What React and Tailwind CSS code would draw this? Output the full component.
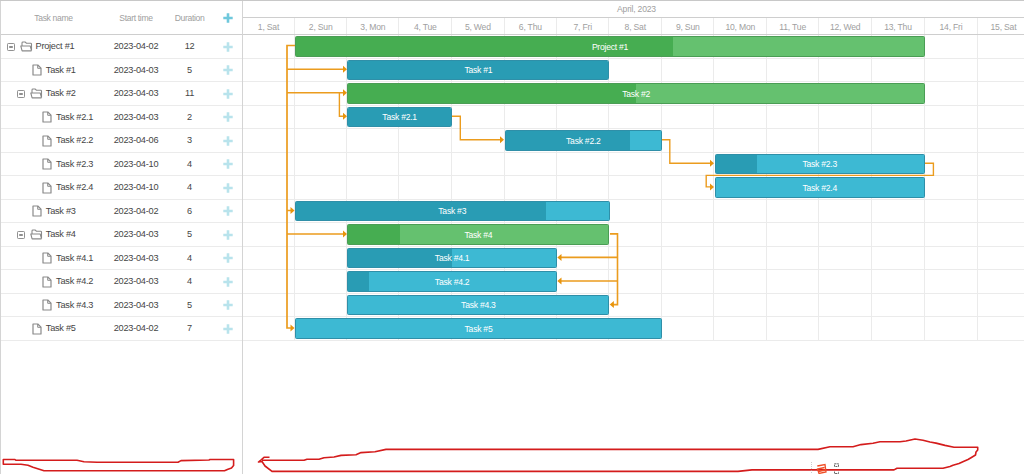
import React from 'react';

const ROW_HEIGHT = 23.5;

const TASKS = [
    { id: 1, name: 'Project #1', start: '2023-04-02', duration: 12, level: 0, group: true, day: 1, span: 12, progress: 60 },
    { id: 2, name: 'Task #1', start: '2023-04-03', duration: 5, level: 1, day: 2, span: 5, progress: 100 },
    { id: 3, name: 'Task #2', start: '2023-04-03', duration: 11, level: 1, group: true, day: 2, span: 11, progress: 50 },
    { id: 4, name: 'Task #2.1', start: '2023-04-03', duration: 2, level: 2, day: 2, span: 2, progress: 100 },
    { id: 5, name: 'Task #2.2', start: '2023-04-06', duration: 3, level: 2, day: 5, span: 3, progress: 80 },
    { id: 6, name: 'Task #2.3', start: '2023-04-10', duration: 4, level: 2, day: 9, span: 4, progress: 20 },
    { id: 7, name: 'Task #2.4', start: '2023-04-10', duration: 4, level: 2, day: 9, span: 4, progress: 0 },
    { id: 8, name: 'Task #3', start: '2023-04-02', duration: 6, level: 1, day: 1, span: 6, progress: 80 },
    { id: 9, name: 'Task #4', start: '2023-04-03', duration: 5, level: 1, group: true, day: 2, span: 5, progress: 20 },
    { id: 10, name: 'Task #4.1', start: '2023-04-03', duration: 4, level: 2, day: 2, span: 4, progress: 50 },
    { id: 11, name: 'Task #4.2', start: '2023-04-03', duration: 4, level: 2, day: 2, span: 4, progress: 10 },
    { id: 12, name: 'Task #4.3', start: '2023-04-03', duration: 5, level: 2, day: 2, span: 5, progress: 0 },
    { id: 13, name: 'Task #5', start: '2023-04-02', duration: 7, level: 1, day: 1, span: 7, progress: 0 },
];

const DAYS = ['1, Sat', '2, Sun', '3, Mon', '4, Tue', '5, Wed', '6, Thu', '7, Fri', '8, Sat', '9, Sun', '10, Mon', '11, Tue', '12, Wed', '13, Thu', '14, Fri', '15, Sat'];

// Left edge of every day column, relative to the timeline
const EDGES = [0, 52, 104.3, 156.5, 209, 261.7, 314, 366.5, 419, 471.5, 524, 576.4, 629, 682, 735, 787];

const dayWidth = (i) => EDGES[i + 1] - EDGES[i];

const PlusIcon = ({ className }) => (
    <svg width="10" height="10" viewBox="0 0 10 10" className={className}>
        <path d="M5 0.3V9.7M0.3 5H9.7" stroke="currentColor" strokeWidth="2.6" />
    </svg>
);

const ToggleIcon = () => (
    <svg width="8" height="8" viewBox="0 0 8 8" className="shrink-0">
        <rect x="0.5" y="0.5" width="7" height="7" rx="0.8" fill="#fff" stroke="#858585" strokeWidth="0.9" />
        <path d="M2.2 4H5.8" stroke="#333" strokeWidth="1.1" />
    </svg>
);

const FolderIcon = () => (
    <svg width="13" height="11" viewBox="0 0 13 11" className="shrink-0" fill="none" stroke="#8a8a8a" strokeWidth="1.1">
        <path d="M2 4.9V1.9Q2 1 2.9 1H5.2L6.4 2.2H10.6Q11.5 2.2 11.5 3.1V9.6" />
        <path d="M11.5 9.9H2.1L0.8 5H10.2L11.5 9.4" strokeLinejoin="round" />
    </svg>
);

const FileIcon = () => (
    <svg width="10" height="12" viewBox="0 0 10 12" className="shrink-0" fill="none" stroke="#8a8a8a" strokeWidth="1.2">
        <path d="M1 1H5.8L9 4.2V11H1Z" strokeLinejoin="round" />
        <path d="M5.7 1V4.3H9" strokeWidth="1" />
    </svg>
);

const GridRow = ({ task }) => (
    <div className="flex h-[23.5px] items-center border-b border-[#ebebeb] pt-px text-[9.2px] tracking-[-0.25px] text-[#454545]">
        <div className="flex w-[105px] items-center pl-[6px]">
            <div className="shrink-0" style={{ width: task.level * 10.3 }} />
            {task.group ? (
                <>
                    <ToggleIcon />
                    <div className="ml-[5px] mr-[2.5px]"><FolderIcon /></div>
                </>
            ) : (
                <div className="ml-[14.5px] mr-[4px]"><FileIcon /></div>
            )}
            <span className="whitespace-nowrap">{task.name}</span>
        </div>
        <div className="w-[60px] text-center">{task.start}</div>
        <div className="w-[47px] text-center">{task.duration}</div>
        <div className="flex w-[29px] justify-center"><PlusIcon className="text-[#b8e3ec]" /></div>
    </div>
);

const TaskBar = ({ task }) => {
    const left = EDGES[task.day];
    const width = EDGES[task.day + task.span] - left;
    const colors = task.group ? 'bg-[#65c16f] border-[#4b9d55]' : 'bg-[#3db9d3] border-[#2f8fa8]';

    return (
        <div className={`relative h-[20.5px] overflow-hidden rounded-[1.5px] border ${colors}`} style={{ marginLeft: left, width }}>
            <div className={`h-full ${task.group ? 'bg-[#46ad51]' : 'bg-[#299cb4]'}`} style={{ width: `${task.progress}%` }} />
            <div className="absolute inset-0 flex items-center justify-center pt-[2px] text-[8.6px] tracking-[-0.25px] text-white">{task.name}</div>
        </div>
    );
};

const Links = () => (
    <svg width="1024" height="474" viewBox="0 0 1024 474" className="pointer-events-none absolute left-0 top-0">
        <g fill="none" stroke="#eb9c1e" strokeWidth="1.4">
            <path d="M295 45.5H287V328H291" strokeWidth="1.7" />
            <path d="M287 69.2H344M287 92.7H344M339.4 92.7V116.2H344M287 210.5H291M287 234H344" />
            <path d="M452 116.2H460.3V139.8H501" />
            <path d="M662 139.8H669.8V163.3H711" />
            <path d="M925 163.3H933.4V175.4H706.2V186.9H711" />
            <path d="M610 233.9H617.5V304.6H613M617.5 257.4H561M617.5 281H561" strokeWidth="1.6" />
        </g>
        <g fill="#e8940c">
            <path d="M343 65.7L347 69.2L343 72.7Z" />
            <path d="M343 89.2L347 92.7L343 96.2Z" />
            <path d="M343 112.7L347 116.2L343 119.7Z" />
            <path d="M290.5 207L294.5 210.5L290.5 214Z" />
            <path d="M343 230.5L347 234L343 237.5Z" />
            <path d="M290.5 324.5L294.5 328L290.5 331.5Z" />
            <path d="M500 136.3L504 139.8L500 143.3Z" />
            <path d="M710 159.8L714 163.3L710 166.8Z" />
            <path d="M710 183.4L714 186.9L710 190.4Z" />
            <path d="M561.5 253.9L557.3 257.4L561.5 260.9Z" />
            <path d="M561.5 277.5L557.3 281L561.5 284.5Z" />
            <path d="M613.9 301.1L609.7 304.6L613.9 308.1Z" />
        </g>
    </svg>
);

// Hand drawn red marks along the bottom edge
const Marks = () => (
    <svg width="1024" height="474" viewBox="0 0 1024 474" className="pointer-events-none absolute left-0 top-0">
        <g fill="none" stroke="#d41c1c" strokeWidth="1.6" strokeLinejoin="round">
            <path d="M3.3 459.5H15L16 460.3H77L84 461.7L97 462.3H178L181 460.6L209 460L210 459.5H233.6V465.5L231.5 468L228 469.2L224.5 470.8H44L33 467.3L28 465.3L21 464.3H3.3Z" />
            <path d="M269.5 457.3H264L261.5 459.5L258.5 462L262 461.5L265 466L272 471.4H738L752 469.9H894L897 468.2H943L950 466.4L953 465.2L959 463.5L964 461.2L968 459.5L971 457.7L975.5 455L976 452L977.7 450V447.2H954L945 445.4L936 443.1L930 442L923 440.3L915 439L906 441L900 441.8H880L873 443.3L861 444.6L853 446.7H830L818 449.4H386L375 451.8L361 452.6L356 454.7L341 455.4L334 457L324 457.7L319 459.2H307L304 460.3H262" />
        </g>
        <path d="M817.3 466L825 464.5L826 472L819 473.5L817.5 469L824.5 467.5M818.5 471.5L825 470" fill="none" stroke="#f04e26" strokeWidth="1.3" />
        <path d="M811.5 462V474" stroke="#aaa" strokeWidth="0.6" strokeDasharray="1 1" />
        <path d="M834.5 463.8H838.5V466.5H834.5ZM834.5 471.5V473.5H838.5V471.5" fill="none" stroke="#555" strokeWidth="0.9" strokeDasharray="2 0.6" />
    </svg>
);

const App = () => (
    <div className="relative flex h-[474px] w-[1024px] overflow-hidden border-t border-[#c8c8c8] bg-white font-['Liberation_Sans',Arial,sans-serif] leading-none">
        <div className="w-[243px] shrink-0 border-x border-[#d4d4d4]">
            <div className="flex h-[34px] items-center border-b border-[#cecece] text-[8.6px] tracking-[-0.35px] text-[#a0a0a0]">
                <div className="w-[105px] pt-px text-center">Task name</div>
                <div className="w-[60px] pt-px text-center">Start time</div>
                <div className="w-[47px] pt-px text-center">Duration</div>
                <div className="flex w-[29px] justify-center"><PlusIcon className="text-[#6fc8dc]" /></div>
            </div>
            {TASKS.map(task => <GridRow key={task.id} task={task} />)}
        </div>

        <div className="w-[787px] shrink-0 text-[8.6px] tracking-[-0.2px] text-[#a0a0a0]">
            <div className="flex h-[17px] items-center justify-center border-b border-[#cecece] pt-px">April, 2023</div>
            <div className="flex h-[17px] border-b border-[#cecece]">
                {DAYS.map((day, i) => (
                    <div key={day} className="flex shrink-0 items-center justify-center border-r border-[#ebebeb] pt-[2px]" style={{ width: dayWidth(i) }}>
                        {day}
                    </div>
                ))}
            </div>
            <div className="grid">
                <div className="col-start-1 row-start-1 flex" style={{ height: TASKS.length * ROW_HEIGHT }}>
                    {DAYS.map((day, i) => (
                        <div key={day} className="shrink-0 border-r border-[#ebebeb]" style={{ width: dayWidth(i) }} />
                    ))}
                </div>
                <div className="col-start-1 row-start-1">
                    {TASKS.map(task => (
                        <div key={task.id} className="h-[23.5px] border-b border-[#ebebeb] pt-[1px]">
                            <TaskBar task={task} />
                        </div>
                    ))}
                </div>
            </div>
        </div>

        {/* top border shifts the overlays, so pull them back by a pixel */}
        <div className="pointer-events-none absolute -top-px left-0">
            <Links />
            <Marks />
        </div>
    </div>
);

export default App;
